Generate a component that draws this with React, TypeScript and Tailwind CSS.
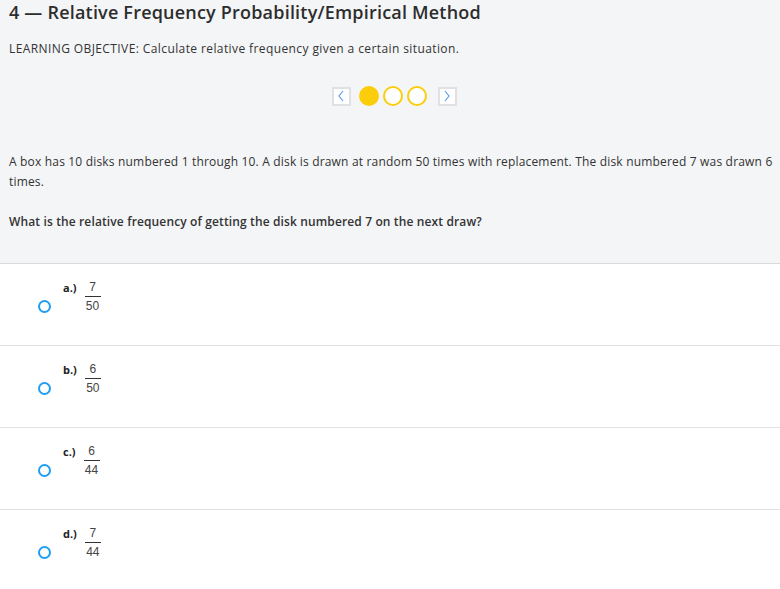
const options = [
  { label: 'a.)', num: '7', den: '50' },
  { label: 'b.)', num: '6', den: '50' },
  { label: 'c.)', num: '6', den: '44' },
  { label: 'd.)', num: '7', den: '44' },
]

function Pager() {
  return (
    <div className="flex items-center justify-center gap-[4px] pl-[1px]">
      <div className="w-[19px] h-[19px] border-2 border-[#dfe1e4] bg-white flex items-center justify-center mr-[4px]">
        <svg width="8" height="12" viewBox="0 0 8 12" fill="none" stroke="#5b9ef0" strokeWidth="1.2">
          <path d="M6 1 L2 6 L6 11" />
        </svg>
      </div>
      <div className="w-[20px] h-[20px] rounded-full bg-[#fbcd0a]" />
      <div className="w-[20px] h-[20px] rounded-full border-2 border-[#fbcd0a] bg-white" />
      <div className="w-[20px] h-[20px] rounded-full border-2 border-[#fbcd0a] bg-white" />
      <div className="w-[19px] h-[19px] border-2 border-[#dfe1e4] bg-white flex items-center justify-center ml-[7px]">
        <svg width="8" height="12" viewBox="0 0 8 12" fill="none" stroke="#5b9ef0" strokeWidth="1.2">
          <path d="M2 1 L6 6 L2 11" />
        </svg>
      </div>
    </div>
  )
}

export default function App() {
  return (
    <div className="w-[780px] h-[589px] bg-white text-[#333] overflow-hidden" style={{ fontFamily: '"Open Sans", "Liberation Sans", sans-serif' }}>
      <div className="bg-[#f4f5f7] h-[264px] border-b border-[#d9dadc] pl-[9px] pr-[2px]">
        <h1 className="pt-0 text-[18px] tracking-[0.2px] font-semibold leading-[24px] text-[#2d2d2d]">
          4 — Relative Frequency Probability/Empirical Method
        </h1>
        <p className="mt-[17px] text-[12px] tracking-[0.4px] leading-[16px]">
          <span>LEARNING OBJECTIVE:</span> Calculate relative frequency given a certain situation.
        </p>
        <div className="mt-[29px]">
          <Pager />
        </div>
        <p className="mt-[46px] text-[12px] tracking-[0.18px] leading-[20px]">
          A box has 10 disks numbered 1 through 10. A disk is drawn at random 50 times with replacement. The disk numbered 7 was drawn 6 times.
        </p>
        <p className="mt-[20px] text-[12px] tracking-[0.13px] leading-[20px] font-semibold">
          What is the relative frequency of getting the disk numbered 7 on the next draw?
        </p>
      </div>
      {options.map((o) => (
        <div key={o.label} className="h-[82px] border-b border-[#e1e2e4] flex items-start pl-[38px] pt-[16px]">
          <div className="w-[13px] h-[13px] rounded-full border-2 border-[#1e9ef4] mt-[20px]" />
          <span className="ml-[12px] mt-[1px] text-[11px] font-bold leading-[14px] text-[#222]">{o.label}</span>
          <div className="ml-[8px] flex flex-col items-center text-[12px] leading-[14px] text-[#444]" style={{ fontFamily: '"Liberation Sans", sans-serif' }}>
            <span>{o.num}</span>
            <span className="w-[16px] border-t border-[#333] my-[2px]" />
            <span>{o.den}</span>
          </div>
        </div>
      ))}
    </div>
  )
}
